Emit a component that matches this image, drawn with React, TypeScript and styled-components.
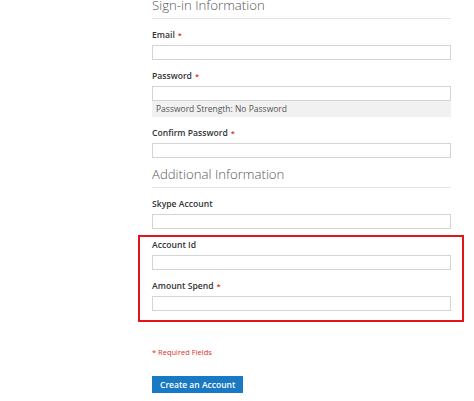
import * as React from "react"
import styled, { createGlobalStyle } from "styled-components"

const GlobalStyle = createGlobalStyle`
  html, body {
    margin: 0;
    padding: 0;
    background: #ffffff;
  }
  body {
    font-family: "Open Sans", "Liberation Sans", sans-serif;
    color: #333333;
  }
`

const Page = styled.div`
  width: 474px;
  height: 401px;
  overflow: hidden;
  padding-left: 152px;
  box-sizing: border-box;
`

const Form = styled.form`
  width: 299px;
  display: flex;
  flex-direction: column;
`

const Legend = styled.div<{ $first?: boolean }>`
  font-size: 13.2px;
  font-weight: 300;
  line-height: 16px;
  color: #575757;
  margin-top: ${props => (props.$first ? "-3px" : "-2px")};
  padding-bottom: 5px;
  border-bottom: 1px solid #e4e4e4;
  margin-bottom: 10px;
  white-space: nowrap;
`

const Field = styled.div`
  display: flex;
  flex-direction: column;
  margin-bottom: 10px;
`

const Label = styled.label`
  font-size: 8.6px;
  font-weight: 600;
  line-height: 12px;
  color: #333333;
  margin-bottom: 4px;
  white-space: nowrap;
`

const Star = styled.span`
  color: #e02b27;
  margin-left: 3px;
  font-size: 7.5px;
`

const Input = styled.input`
  height: 15px;
  width: 299px;
  box-sizing: border-box;
  border: 1px solid #d4d4d4;
  background: #ffffff;
  padding: 0 4px;
  margin: 0;
  outline: none;
`

const Strength = styled.div`
  background: #f1f1f1;
  height: 16px;
  line-height: 16px;
  font-size: 8.5px;
  color: #555555;
  padding-left: 4px;
  white-space: nowrap;
`

const Highlight = styled.div`
  border: 2px solid #e3141b;
  margin: -4px -13px 0 -14px;
  padding: 2px 11px 0 12px;

  & > div:last-child {
    margin-bottom: 9px;
  }
`

const Required = styled.div`
  font-size: 7.5px;
  color: #e02b27;
  margin-top: 24px;
  line-height: 12px;
`

const Button = styled.button`
  align-self: flex-start;
  margin-top: 18px;
  height: 17px;
  padding: 0 7px;
  background: #1979c3;
  border: 1px solid #1979c3;
  color: #ffffff;
  font-family: "Open Sans", "Liberation Sans", sans-serif;
  font-size: 8.5px;
  font-weight: 600;
  line-height: 15px;
`

interface FormFieldProps {
  label: string
  required?: boolean
  children?: React.ReactNode
}

const FormField = ({ label, required, children }: FormFieldProps) => (
  <Field>
    <Label>
      {label}
      {required && <Star>*</Star>}
    </Label>
    <Input type="text" />
    {children}
  </Field>
)

export default function App() {
  return (
    <Page>
      <GlobalStyle />
      <Form onSubmit={e => e.preventDefault()}>
        <Legend $first>Sign-in Information</Legend>
        <FormField label="Email" required />
        <FormField label="Password" required>
          <Strength>Password Strength: No Password</Strength>
        </FormField>
        <FormField label="Confirm Password" required />
        <Legend>Additional Information</Legend>
        <FormField label="Skype Account" />
        <Highlight>
          <FormField label="Account Id" />
          <FormField label="Amount Spend" required />
        </Highlight>
        <Required>* Required Fields</Required>
        <Button type="submit">Create an Account</Button>
      </Form>
    </Page>
  )
}
